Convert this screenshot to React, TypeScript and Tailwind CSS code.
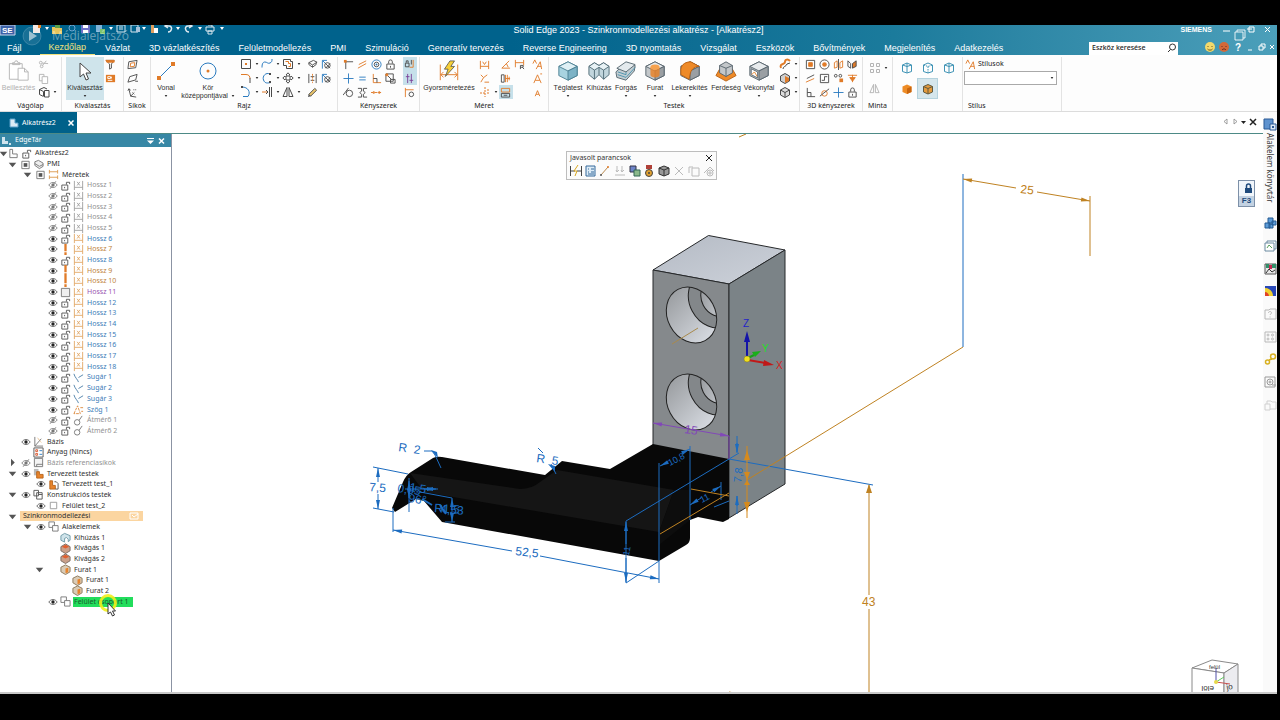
import React from 'react';
import clsx from 'clsx';

const O = '#e07b28';
const B = '#2b7bbf';
const K = '#4a4a4a';
const G = '#b4b4b4';

/* 12x12 ribbon glyphs */
const glyphs: Record<string, React.ReactNode> = {
  cut: <g stroke={G}><circle cx="3" cy="4" r="1.5" /><circle cx="4" cy="8" r="1.5" /><path d="M4.5 4.5 11 5M5 7 9 2" /></g>,
  copy: <g stroke={G}><path d="M1.5 1.5h5v7h-5z" /><path d="M4.5 4h6v7.5h-6z" fill="#fff" /></g>,
  pasteSpecial: <g stroke={K}><path d="M6 1.5 1.5 3.5v5l4 2M6 1.5l3 1.5M1.5 3.5l4 2V10" /><path d="M6.5 4.5H11V11H6.5z" fill="#fff" /></g>,
  filter: <g stroke={K}><path d="M1 1.5h9L7 5.5V10l-2 1V5.500z" fill="#fff" /><path d="M1 1.5h9v2H2z" fill={O} stroke={O} /></g>,
  filterBox: <g><path d="M1 2h10v8H1z" fill={O} /><path d="M3 4h3v2H3zM7 4v2M3 8h5" stroke="#fff" /></g>,
  plane1: <g stroke={K}><path d="M2 3l9-1.5-1.5 8L1 10.5z" /><path d="M4 4.5l4.5-.5-.5 4-4.5.5z" stroke={O} /></g>,
  plane2: <g stroke={K}><path d="M3 4l8-2.5-1.5 6L1 10z" /><path d="M9 9h3" /></g>,
  plane3: <g stroke={K}><path d="M2 2l2 8 6 1M2 2 1 4M2 2l2 1.5" /><path d="M7 3h3M6 6l2 2" strokeDasharray="1 1" /><path d="M4 10 8 6" /></g>,
  rect: <g stroke={K}><path d="M1.5 1.5h9v9h-9z" /><path d="M5 5h2v2H5z" fill={O} stroke="none" /></g>,
  curve: <path d="M1 9.500c0-4 1-5.500 3-5.500s3 2 5 1 2-2 2-4" stroke={B} />,
  offset: <g stroke={K}><path d="M1.5 1.5h7v2h2v7h-6v-3h-3z" /><path d="M3.5 3.5h3v2h2v3h-2" stroke={O} /></g>,
  erase: <g stroke={K}><path d="M2 4l5-2.5 4 2-5 3zM2 4v2l4 3V7M6 9l4-3V4" /></g>,
  relate: <g stroke={K}><path d="M1.5 1.5v9M1.5 1.5h5M2 2l3 3" stroke={B} /><circle cx="7" cy="7" r="3" /><path d="M5 5l5 5M10 5 5 10" /></g>,
  fillet: <g><path d="M1 2.5h5c3 0 4 2 4 4" stroke={O} /><path d="M10 6v5" stroke={K} /></g>,
  arc: <g><path d="M9 2C5 0 1 4 2.5 8S7 11 10 10.5" stroke={B} /><path d="M8 1h2v2H8zM8 9h2v2H8z" fill={K} /></g>,
  move: <path d="M6 .8 4 3h1v2H3V4L.8 6 3 8V7h2v2H4l2 2.2L8 9H7V7h2v1l2.200-2L9 4v1H7V3h1z" stroke={K} fill="#fff" />,
  symDim: <g stroke={K}><path d="M2 1v10M10 1v10M4 4h4M4 8h4" /><path d="M6 1v10" stroke={O} strokeDasharray="2 1" /></g>,
  arc2: <g><path d="M2 1c6 0 9 5 6 9.500H3" stroke={B} /><path d="M1 0h2v2H1z" fill={K} /></g>,
  trim: <g><path d="M1 6h6" stroke={O} /><path d="M8.5 1v10M10.5 1v10M5 4l2 2-2 2" stroke={K} /></g>,
  mirror: <path d="M5 1.5v9H1zM7 1.5v9h4z" stroke={K} />,
  pencil: <g><path d="M2 8 8.5 1.5l2 2L4 10z" fill="#e9c46a" stroke={K} /><path d="M1 11l1-3 2 2z" fill={K} /></g>,
  corner: <g><path d="M3 11V3h8" stroke={K} /><path d="M1 1h3v3H1z" fill={O} /></g>,
  slashes: <path d="M1 10 10 5M2 6l8-4" stroke={O} />,
  concentric: <g stroke={B}><circle cx="6" cy="6" r="5" /><circle cx="6" cy="6" r="2.5" stroke={K} /><circle cx="6" cy="6" r=".6" fill={K} /></g>,
  lock: <g stroke={K}><path d="M2 5.5h8V11H2z" /><path d="M4 5V3a2 2 0 0 1 4 0v2M6 7.5v2" /></g>,
  plus: <path d="M6 .5v11M.5 6h11" stroke={B} />,
  equal: <path d="M2.5 4.5h7M2.5 7.5h7" stroke={B} />,
  perp: <g><path d="M2.5 1v9.5H11" stroke={O} /><path d="M2.5 6h4v4.5" stroke={K} /></g>,
  rigid: <g stroke={K}><path d="M1 1h8v8H1zM3 3l4 4M6 7h5v4H6z" /><path d="M1 1h2v2H1z" fill={O} stroke={O} /></g>,
  tangent: <g stroke={K}><circle cx="7" cy="7" r="3.5" /><path d="M0 9 6 1" /></g>,
  symmetric: <path d="M1 1.5h4v3L3 6l2 2v3H1M11 1.5H7v3L9 6 7 8v3h4" stroke={K} />,
  horiz: <g stroke={O}><path d="M0 6h12" strokeDasharray="3 1" /><circle cx="3" cy="6" r="1" /><circle cx="9" cy="6" r="1" /></g>,
  lockPt: <g stroke={K}><path d="M1.5 4.5h4v4h-4zM2.5 4V2h2v2M8 1v5" /><path d="M10 1v8H6" stroke={O} /></g>,
  updown: <path d="M4 1v10M2 4h4M8 1v10M6 8h4" stroke="#7b3f98" />,
  dimGear: <g><path d="M1.5 1v10M1.5 3h9" stroke={O} /><circle cx="8" cy="8" r="2.5" stroke={K} /></g>,
  dim: <g stroke={O}><path d="M1.5 2v9M10.5 2v9M1.5 8h9M4 3l2 3 2-3" /></g>,
  angle: <g stroke={O}><path d="M10 2 2 10h9M7 5l2 4" /></g>,
  dimR: <g stroke={O}><path d="M1.5 1v8M10.5 1v6M1.5 4h9" /><path d="M7 11V7h3v2H7M9 9l2 2" stroke={K} /></g>,
  angleDim: <g stroke={O}><path d="M2 2l3 3-3 5M5 5l4-3M6 10h5" /></g>,
  colDim: <g><path d="M1.5 2h3v8h-3z" stroke={K} /><path d="M6 2v8M8 2v8M10 4v4M6 6h5" stroke={O} /></g>,
  coordDim: <g><path d="M1 7h5V1M6 7v4M8 4h3M8 7h3" stroke={O} strokeDasharray="2 1" /></g>,
  autoDim: <g stroke={K}><path d="M1.5 1.5h9v4h-9z" stroke={O} /><path d="M1.5 7h9v4h-9zM4 9h4" /></g>,
  letters: <g stroke={O}><path d="M1 5 3 1l2 4M4.5 11 9 3l1.5 8M6 8h4" /></g>,
  letterBig: <path d="M2 11 6 2l4 9M3.5 8h5M9 1h2" stroke={O} />,
  letterSmall: <path d="M3.5 10 6 4l2.5 6M4.5 8h3" stroke={O} />,
  sweep: <g><path d="M2 10c-2-5 4-3 4-6s3-3 5-1" stroke={O} strokeWidth="2" /><path d="M4 11c0-3 3-2 4-5l3-1" stroke={K} /></g>,
  solidMini: <g><path d="M1.5 4 6 1.5 10.5 4v5L6 11.5 1.5 9z" fill="#cfcfcf" stroke={K} /><path d="M6 4l4 2v3l-4 2z" fill={O} /></g>,
  boxMini: <g stroke={K}><path d="M1.5 4 6 1.5 10.5 4v5L6 11.5 1.5 9z" fill="#ddd" /><path d="M1.5 4 6 6.5 10.5 4M6 6.5v5" /></g>,
  squareDot: <g stroke={K}><path d="M1.5 1.5h9v9h-9z" /><path d="M4 4h4v4H4z" stroke={O} fill={O} /></g>,
  circleDot: <g><circle cx="6" cy="6" r="5" stroke={K} /><circle cx="6" cy="6" r="2.5" fill={O} /></g>,
  parallel: <g><path d="M1.5 10V4l3-2v7zM7.5 10V4l3-2v7z" stroke={O} /><path d="M6 0v12" stroke={K} /></g>,
  coplanar: <g><path d="M1 2l3 3v5L1 8z" stroke={K} /><path d="M6 5l4-3v6l-4 2z" fill={O} stroke={K} /></g>,
  slash2: <g><path d="M1 10 10 6" stroke={O} /><path d="M2 6l8-4" stroke={K} /></g>,
  boxS: <g stroke={K}><path d="M1.5 1.5h9v9h-9zM3 8h3V4h3" /></g>,
  dots: <g><circle cx="3" cy="3" r="1.5" stroke={K} /><circle cx="8" cy="3" r="1.5" stroke={K} /><path d="M7 6h4v4H7z" fill={O} /></g>,
  flagDown: <path d="M1 2.5h10M6 2v8M3 5l3 4 3-4z" stroke={O} fill={O} />,
  perpK: <path d="M2.5 1v9.5H11M2.5 6h4v4.5" stroke={K} />,
  tangO: <g><circle cx="6" cy="7" r="3" stroke={O} /><path d="M1 10 11 2" stroke={K} /></g>,
  pattern: <g stroke={G}><path d="M1.5 1.5h3v3h-3zM7.5 1.5h3v3h-3zM1.5 7.5h3v3h-3zM7.5 7.5h3v3h-3z" /></g>,
  mirrorG: <path d="M5 1.5v9H1zM7 1.5v9h4z" stroke={G} />,
  wire: <g stroke="#3f93b5"><path d="M1.5 3 6 1l4.5 2v6.500L6 11 1.5 9.5zM6 1v10M1.5 3 6 4.5 10.5 3" /></g>,
  wire2: <g stroke="#3f93b5"><path d="M1.5 3 6 1l4.5 2v6.500L6 11 1.5 9.5z" /><path d="M1.5 3 6 4.5 10.5 3M6 4.5V11" strokeDasharray="1.5 1" /></g>,
  shaded: <g><path d="M1.5 3.5 6 1.5l4.5 2V9L6 11 1.5 9z" fill="#ee8c26" /><path d="M6 5.5 10.5 3.5V9L6 11z" fill="#c9660f" /></g>,
  shadedEdge: <g stroke="#5f5a40"><path d="M1.5 3.5 6 1.5l4.5 2V9L6 11 1.5 9z" fill="#e49a3d" /><path d="M1.5 3.5 6 5.5l4.5-2M6 5.5V11" /></g>,
};

const Glyph = ({ n, s = 12 }: { n: string; s?: number }) => (
  <svg viewBox="0 0 12 12" width={s} height={s} fill="none" className="shrink-0">{glyphs[n]}</svg>
);

const Caret = ({ className = '' }: { className?: string }) => (
  <svg viewBox="0 0 4 3" className={clsx('h-[2px] w-[4px] shrink-0', className)}><path d="M0 0h4L2 3z" fill="#333" /></svg>
);

/* small ribbon button, optionally followed by a drop-down caret */
const Tool = ({ n, caret, on }: { n: string; caret?: boolean; on?: boolean }) => (
  <button aria-label={n} className={clsx('flex h-[14px] items-center pl-px', caret ? 'w-[21px] gap-[3px]' : 'w-[14px]', on && 'bg-[#c6e0ea]')}>
    <Glyph n={n} s={caret ? 12 : 11} />
    {caret && <Caret />}
  </button>
);

const Col = ({ items, caret, className = '' }: { items: (string | null)[]; caret?: boolean; className?: string }) => (
  <div className={clsx('flex flex-col', className)}>
    {items.map((n, i) => (n ? <Tool key={i} n={n} caret={caret} /> : <span key={i} className="h-[14px] w-[14px]" />))}
  </div>
);

const Group = ({ label, width, children }: { label?: string; width: string; children: React.ReactNode }) => (
  <section className={clsx('flex h-full shrink-0 flex-col border-r border-[#e3e3e3]', width)}>
    <div className="flex h-[43px] items-start">{children}</div>
    <div className="h-[11px] text-center font-['Noto_Sans'] text-[7px] leading-[11px] whitespace-nowrap text-[#222]">{label}</div>
  </section>
);

const Big = ({ label, width, icon, caret, on, dim, second }: {
  label: string; width: string; icon: React.ReactNode; caret?: boolean; on?: boolean; dim?: boolean; second?: string;
}) => (
  <button className={clsx('flex h-[43px] shrink-0 flex-col items-center pt-px', width, on && 'bg-[#cfe4eb]', dim ? 'text-[#b0b0b0]' : 'text-[#2e2e2e]')}>
    <span className="flex h-[26px] items-center justify-center">{icon}</span>
    <span className="text-[7px] leading-[8px] whitespace-nowrap">{label}</span>
    {second && <span className="flex items-center gap-[3px] text-[7px] leading-[7px] whitespace-nowrap">{second}<Caret /></span>}
    {caret && <Caret className="mt-[3px]" />}
  </button>
);

const solid = (extra?: React.ReactNode) => (
  <svg viewBox="0 0 24 24" className="size-[22px]" fill="none">
    <path d="M2 7 12 2l10 5v10l-10 5L2 17z" fill="#c3c7ca" stroke="#55636b" />
    <path d="M2 7 12 2l10 5-10 5z" fill="#e8ebed" stroke="#55636b" />
    <path d="M12 12v10l10-5V7z" fill="#9a9fa3" stroke="#55636b" />
    {extra}
  </svg>
);

const bigIcons = {
  paste: <svg viewBox="0 0 24 24" className="size-[22px]" fill="#fff" stroke={G}><path d="M1.5 4h14v17h-14zM5 5V3h2l1-2h2l1 2h2v2z" /><path d="M11 9h7l4 4v9H11zM18 9v4h4" /></svg>,
  arrow: <svg viewBox="0 0 22 22" className="size-[22px]" fill="#fff" stroke="#444"><path d="M6 3v14l3.500-3 2.500 6 2.500-1-2.500-6H17z" /></svg>,
  line: <svg viewBox="0 0 22 22" className="size-[22px]"><path d="M4 18 18 4" stroke={B} /><path d="M2 16h4v4H2zM16 2h4v4h-4z" fill={O} /></svg>,
  circle: <svg viewBox="0 0 22 22" className="size-[22px]" fill="none"><circle cx="11" cy="11" r="8" stroke={B} /><circle cx="11" cy="11" r="1.5" fill={O} /></svg>,
  smart: <svg viewBox="0 0 24 24" className="size-[22px]" fill="none"><path d="M2.5 5v17M21.5 5v17M3 16h18M6 13l-3 3 3 3M18 13l3 3-3 3" stroke={O} /><path d="M13 1 7 10h4l-3 8 10-11h-4l4-6z" fill="#f7d038" stroke="#444" strokeWidth=".8" /></svg>,
  block: (
    <svg viewBox="0 0 24 24" className="size-[22px]"><path d="M2 7 12 2l10 5v10l-10 5L2 17z" fill="#a8d3e0" stroke="#4a7f92" /><path d="M2 7l10-5 10 5-10 5z" fill="#dff0f5" stroke="#4a7f92" /><path d="M12 12v10l10-5V7z" fill="#7db3c6" stroke="#4a7f92" /></svg>
  ),
  extrude: (
    <svg viewBox="0 0 24 24" className="size-[22px]"><path d="M1 7l6-4 5 3 5-3 6 4v9l-6 5-5-5-5 5-6-5z" fill="#c2d6dd" stroke="#4f6a75" /><path d="M1 7l6-4 5 3 5-3 6 4-6 4-5-3-5 3z" fill="#e8f2f5" stroke="#4f6a75" /><path d="M7 11v10M17 11v10M12 8v8" stroke="#4f6a75" /></svg>
  ),
  revolve: (
    <svg viewBox="0 0 24 24" className="size-[22px]" stroke="#54666e"><path d="M1 13l11-10 10 3-1 6-9 10-10-3z" fill="#c3cdd2" /><path d="M2 9l10-7 10 3L12 13z" fill="#e4eaed" /><path d="M12 13v3L3 13M22 8 12 19 3 16" fill="none" stroke="#4a93ad" /></svg>
  ),
  hole: solid(<g><ellipse cx="12" cy="8" rx="5" ry="3" fill="#f6a24f" /><path d="M7 8c0 4 10 4 10 0v8c0 4-10 4-10 0z" fill="#e8842c" opacity=".85" /></g>),
  round: solid(<path d="M2 10C3 4 8 2 13 2l9 5c-6 0-9 4-10 9l-1 5-9-5z" fill="#ee8a28" stroke="#b85f10" />),
  draft: <svg viewBox="0 0 24 24" className="size-[22px]"><path d="M1 17 5 10h14l4 7-11 6z" fill="#ee8a28" stroke="#b85f10" /><path d="M5 6l7-4 7 4v8l-7 4-7-4z" fill="#c3c7ca" stroke="#55636b" /><path d="M5 6l7 3 7-3M12 9v9" stroke="#55636b" fill="none" /></svg>,
  shell: solid(<g><path d="M3.5 9.500l7 3.500v6.500l-7-3.500z" fill="#fff" stroke="#55636b" /><path d="M4 16l3-3 3 5" fill="none" stroke="#e8842c" /></g>),
};

/* tree glyphs */
const treeIcons: Record<string, React.ReactNode> = {
  part: <path d="M2 1.5h3v5h5v4H2z" stroke="#777" />,
  lock: <path d="M2 5.5h6.500V11H2zM5 7.5v1.5M7 5V2.500h3.500v2" stroke="#555" />,
  check: <g><path d="M2 2.5h8v8H2z" stroke="#777" /><path d="M4 4.5h4v4H4z" fill="#555" /></g>,
  pmi: <g stroke="#777"><path d="M2 3l4-1.5 5 3V8L7 10.5 2 7z" fill="#eee" /><path d="M2 5l5 3 4-2" /></g>,
  dims: <g stroke="#dc9a4e"><path d="M1.5 1v4M10.5 1v4M1.5 3h9M1.5 7v4M10.5 7v4M1.5 9h9" /></g>,
  dimOff: <g stroke="#a0a0a0"><path d="M1.5 1v10M10.5 1v10M1.5 8h9M4.5 2l3 4M7.5 2l-3 4" /></g>,
  dimOn: <g stroke="#e3a868"><path d="M1.5 1v10M10.5 1v10M1.5 8h9M4.5 2l3 4M7.5 2l-3 4" /></g>,
  mark: <path d="M6 0v8M6 9v3" stroke="#e07b28" strokeWidth="2.5" />,
  box: <path d="M1.5 1.5h9v9h-9z" stroke="#777" fill="#eee" />,
  radius: <g stroke="#4c7fa8"><path d="M1 2c1 4 4 6 5 9M6 6l5-3" /></g>,
  angle: <g stroke="#dc8a3e"><path d="M1 10.5 5 2l3 8.5H1M8 4h3M9 8h2" strokeDasharray="3 1" /></g>,
  diam: <g stroke="#777"><circle cx="4.5" cy="8" r="3" /><path d="M6.500 6 10 1" /></g>,
  base: <g><path d="M2 1v10h9M2 11l7-8" stroke="#777" /><path d="M5 2l4 5" stroke="#d9984c" strokeDasharray="1 1" /></g>,
  material: <g><path d="M1 1h10v10H1z" stroke="#555" /><path d="M3 3h2v2H3zM3 7h2v2H3z" stroke="#d8542c" /><path d="M7 4h3M7 8h3" stroke="#2b7bbf" /></g>,
  planes: <g stroke="#777"><path d="M1.5 1.5h9v9h-9z" fill="#f4f4f4" /><path d="M4 10.5V8h6.500" /></g>,
  bodies: <g><path d="M1 1h5v7H1z" fill="#bbb" /><path d="M4 4h3v3h4v4H4z" fill="#e8842c" stroke="#b8651a" /></g>,
  body: <g><path d="M2 2h3v5h3v4H2z" fill="#e8842c" stroke="#b8651a" /><path d="M7 3h2l2 2v6H8" stroke="#555" /></g>,
  surfs: <g stroke="#555"><path d="M1 1.5h5v6H1zM4 4h6v7H4z" fill="#fff" /><path d="M6 6h4" /></g>,
  surf: <path d="M2.5 2.5h7v7h-7z" stroke="#999" fill="#fff" />,
  feats: <g stroke="#777"><path d="M1 1h6v6H1z" fill="#fff" /><path d="M5 5h6v6H5z" fill="#fff" /></g>,
  extr: <g stroke="#6c98a5"><path d="M1 4l4-2.5L11 4v5l-2 1.5V8L7 6 5 7v4L1 9z" fill="#cfe3ea" /></g>,
  cutout: <g stroke="#7a6a60"><path d="M1 4l5-3 5 3v4.500L6 11.5 1 8.5z" fill="#c9a08a" /><path d="M2 4l4-2 4 2-4 2z" fill="#e06030" stroke="none" /></g>,
  holeF: <g stroke="#8a7558"><path d="M1 3.5 6 1l5 2.5v5L6 11.5 1 8.5z" fill="#d9cbb6" /><path d="M6 5l3-1v5l-3 1z" fill="#e8842c" stroke="none" /></g>,
  eye: <g><path d="M1 6c2.500-4 7.500-4 10 0-2.500 4-7.500 4-10 0z" stroke="#555" fill="#fff" /><circle cx="6" cy="6" r="2" fill="#222" /></g>,
  hidden: <g stroke="#777"><path d="M1 6c2.500-4 7.500-4 10 0-2.500 4-7.500 4-10 0z" /><circle cx="6" cy="6" r="1.5" fill="#777" /><path d="M2.500 10.500l7-9" /></g>,
  down: <path d="M1 3.500h10L6 9.500z" fill="#555" />,
  right: <path d="M4 1v10l5-5z" fill="#555" />,
};

type Row = { t: string; pad: string; s: (string | null)[]; c?: string };
const off = 'text-[#929292]';
const blue = 'text-[#3b7db8]';
const orange = 'text-[#c08440]';
const hossz = (n: number): Row => {
  const hidden = n < 6;
  const mark = n === 7 || n === 9 || n === 10;
  return {
    t: `Hossz ${n}`,
    pad: 'pl-[46px]',
    s: [hidden ? 'hidden' : 'eye', mark ? 'mark' : n === 11 ? 'box' : 'lock', hidden ? 'dimOff' : 'dimOn'],
    c: hidden ? off : mark ? orange : n === 11 ? 'text-[#9a55b0]' : blue,
  };
};

const rows: Row[] = [
  { t: 'Alkatrész2', pad: 'pl-0', s: ['down', 'part', 'lock'] },
  { t: 'PMI', pad: 'pl-[6px]', s: ['down', 'check', 'pmi'] },
  { t: 'Méretek', pad: 'pl-[21px]', s: ['down', 'check', 'dims'] },
  ...Array.from({ length: 18 }, (_, i) => hossz(i + 1)),
  ...[1, 2, 3].map(n => ({ t: `Sugár ${n}`, pad: 'pl-[46px]', s: ['eye', 'lock', 'radius'], c: blue })),
  { t: 'Szög 1', pad: 'pl-[46px]', s: ['eye', 'lock', 'angle'], c: blue },
  { t: 'Átmérő 1', pad: 'pl-[46px]', s: ['hidden', 'lock', 'diam'], c: off },
  { t: 'Átmérő 2', pad: 'pl-[46px]', s: ['hidden', 'lock', 'diam'], c: off },
  { t: 'Bázis', pad: 'pl-[19px]', s: ['eye', 'base'] },
  { t: 'Anyag (Nincs)', pad: 'pl-[32px]', s: ['material'] },
  { t: 'Bázis referenciasíkok', pad: 'pl-[6px]', s: ['right', 'hidden', 'planes'], c: off },
  { t: 'Tervezett testek', pad: 'pl-[6px]', s: ['down', 'eye', 'bodies'] },
  { t: 'Tervezett test_1', pad: 'pl-[34px]', s: ['eye', 'body'] },
  { t: 'Konstrukciós testek', pad: 'pl-[6px]', s: ['down', 'eye', 'surfs'] },
  { t: 'Felület test_2', pad: 'pl-[34px]', s: ['eye', 'surf'] },
  { t: 'Szinkronmodellezési', pad: 'pl-[6px]', s: ['down'] },
  { t: 'Alakelemek', pad: 'pl-[21px]', s: ['down', 'eye', 'feats'] },
  { t: 'Kihúzás 1', pad: 'pl-[59px]', s: ['extr'] },
  { t: 'Kivágás 1', pad: 'pl-[59px]', s: ['cutout'] },
  { t: 'Kivágás 2', pad: 'pl-[59px]', s: ['cutout'] },
  { t: 'Furat 1', pad: 'pl-[33px]', s: ['down', null, 'holeF'] },
  { t: 'Furat 1', pad: 'pl-[71px]', s: ['holeF'] },
  { t: 'Furat 2', pad: 'pl-[71px]', s: ['holeF'] },
  { t: 'Felület csoport 1', pad: 'pl-[46px]', s: ['eye', 'feats'], c: 'text-[#1c5a2c]' },
];

const TreeRow = ({ row }: { row: Row }) => {
  const band = row.t === 'Szinkronmodellezési';
  const picked = row.t === 'Felület csoport 1';
  return (
    <li className={clsx('flex min-h-0 items-center', row.pad)}>
      {row.s.map((n, i) => (
        <span key={i} className={clsx('flex shrink-0 justify-center', row.pad === 'pl-0' && i === 0 ? 'w-[7px]' : 'w-[13px]')}>
          {n && (
            <svg viewBox="0 0 12 12" fill="none" className={clsx('shrink-0', n === 'down' || n === 'right' ? 'size-[9px]' : n === 'eye' || n === 'hidden' ? 'size-[10px]' : 'size-[11px]')}>
              {treeIcons[n]}
            </svg>
          )}
        </span>
      ))}
      <span
        className={clsx(
          'ml-px flex items-center leading-[10px] whitespace-nowrap',
          row.c ?? 'text-[#303030]',
          band ? 'w-[123px] bg-[#fbd5a0] pl-[3px]' : 'pl-px',
          picked && 'w-[60px] bg-[#22dd5c]',
        )}
      >
        {row.t}
        {band && <svg viewBox="0 0 10 8" className="mr-[4px] ml-auto h-[8px] w-[10px]" fill="none" stroke="#fff"><path d="M1 1h8v6H1zM3 3l2 2 4-3" /></svg>}
      </span>
    </li>
  );
};

const menuTabs = [
  'Vázlat', '3D vázlatkészítés', 'Felületmodellezés', 'PMI', 'Szimuláció', 'Generatív tervezés', 'Reverse Engineering',
  '3D nyomtatás', 'Vizsgálat', 'Eszközök', 'Bővítmények', 'Megjelenítés', 'Adatkezelés',
];

const Header = () => (
  <header className="relative h-[30px] shrink-0 overflow-hidden bg-linear-to-r from-[#00628c] from-40% via-[#1b7b9c] via-70% to-[#4b9fba] text-white">
    <div className="flex h-[16px] items-start">
      <svg viewBox="0 0 230 12" className="h-[12px] w-[230px]" fill="none">
        <path d="M0 0h15v10H0z" fill="#3d62a8" stroke="#c9d7ea" />
        <text x="2" y="8" fontSize="8" fontWeight="bold" fill="#fff" fontFamily="Liberation Sans">SE</text>
        <path d="M33 0h7v8h-7z" fill="#f3e9e4" /><path d="M38 0h3v3h-3z" fill="#e8842c" />
        <path d="M52 2h4l1 1h5v6H52z" fill="#e8c55c" /><path d="M55 0h5v3h-5z" fill="#5ba04a" />
        <circle cx="72" cy="3" r="3" stroke="#6fa5d0" />
        <path d="M81 0h9v8h-9z" fill="#6d70c8" /><path d="M83 0h5v3h-5zM83 5h5v3h-5z" fill="#fff" />
        <path d="M96 0h6v7h-6z" fill="#7fb3d8" /><path d="M100 4h5v5h-5z" fill="#7ec46c" />
        <path d="M117 0h8v7h-8zM119 2h4M119 4h4" stroke="#d9e6ee" />
        <path d="M131 0h7v7h-7z" stroke="#d9e6ee" /><path d="M136 2h4v5h-4z" fill="#a8c4dc" />
        <path d="M151 0h3v8h-3z" fill="#e0a060" /><path d="M154 3h4v5h-4z" fill="#fff" />
        <path d="M166 1h3c4 0 3 6-1 6M168-1l-3 2 3 2M191 1h-3c-4 0-3 6 1 6M189-1l3 2-3 2" stroke="#dde8ef" strokeWidth="1.5" />
        <path d="M206 2h8v4h-8zM208 0h4v2M208 6h4v3h-4z" stroke="#dde8ef" />
        {[45, 109, 142, 176, 198, 220].map(x => <path key={x} d={`M${x} 2h4l-2 3z`} fill="#fff" />)}
      </svg>
      <h1 className="absolute inset-x-0 top-0 text-center text-[9px] leading-[10px] whitespace-nowrap">
        Solid Edge 2023 - Szinkronmodellezési alkatrész - [Alkatrész2]
      </h1>
      <div className="ml-auto flex items-start">
        <span className="mr-[10px] text-[7px] leading-[9px] font-bold">SIEMENS</span>
        <svg viewBox="0 0 55 16" className="h-[16px] w-[55px]" fill="none" stroke="#fff">
          <path d="M1 6h7M27 2h5v5h-5zM25 4h5M43 2l5 5M48 2l-5 5" />
          <path d="M13 7h8v8h-8zM15 7V5h8v8h-2" opacity=".85" />
        </svg>
      </div>
    </div>

    <nav className="flex h-[14px] items-start pl-[7px] text-[9px] leading-[14px] font-medium whitespace-nowrap">
      <button className="mr-[18px]">Fájl</button>
      <button className="mr-[10px] border-b border-[#f3e27c] px-[9px] leading-[13px] text-[#f3e27c]">Kezdőlap</button>
      <div className="flex gap-[19px]">{menuTabs.map(t => <button key={t}>{t}</button>)}</div>
      <div className="ml-auto flex items-center">
        <label className="relative mr-[25px] flex h-[13px] w-[89px] items-center bg-white">
          <input aria-label="Eszköz keresése" defaultValue="Eszköz keresése" className="w-full bg-transparent pl-[3px] font-['Noto_Sans'] text-[7px] text-[#222] outline-none" />
          <svg viewBox="0 0 10 10" className="absolute right-px size-[10px]" fill="none" stroke="#333"><circle cx="5.5" cy="4" r="3" /><path d="M3.500 6.500 1 9" /></svg>
        </label>
        <svg viewBox="0 0 74 14" className="h-[14px] w-[74px]" fill="none">
          <circle cx="7" cy="6" r="5" fill="#f3d96b" /><path d="M5 5v1M9 5v1M4.500 8c1 1.500 4 1.500 5 0" stroke="#6b5a20" />
          <circle cx="21" cy="6" r="5" fill="#d2693a" /><path d="M19 5v1M23 5v1M19 9c1-1.500 3-1.500 4 0" stroke="#6b2f20" />
          <text x="32" y="10" fontSize="10" fontWeight="bold" fill="#fff" fontFamily="Liberation Sans">?</text>
          <path d="M45 9h4M56 5h4v4h-4zM58 5V3h4v4h-2M67 4l4 4M71 4l-4 4" stroke="#fff" />
        </svg>
      </div>
    </nav>

    {/* player overlay */}
    <div className="absolute top-0 left-[21px] flex items-center gap-[9px] text-white/40">
      <svg viewBox="0 0 22 22" className="size-[22px]"><circle cx="11" cy="11" r="9" fill="#ffffff18" stroke="#ffffff30" /><path d="M8 6v10l8-5z" fill="#ffffff90" /></svg>
      <span className="font-['Open_Sans'] text-[12px] leading-[22px]">Médialejátszó</span>
    </div>
  </header>
);

const Ribbon = () => (
  <div className="flex h-[57px] shrink-0 items-start overflow-hidden border-b border-[#dcdcdc] bg-[#fdfdfd] pt-[2px]">
    <Group label="Vágólap" width="w-[62px]">
      <Big label="Beillesztés" width="w-[37px]" icon={bigIcons.paste} dim />
      <div>
        <Col items={['cut', 'copy']} />
        <Tool n="pasteSpecial" caret />
      </div>
    </Group>
    <Group label="Kiválasztás" width="w-[62px]">
      <div className="w-[4px]" />
      <Big label="Kiválasztás" width="w-[38px]" icon={bigIcons.arrow} caret on />
      <Col items={['filter', 'filterBox']} />
    </Group>
    <Group label="Síkok" width="w-[27px]"><Col items={['plane1', 'plane2', 'plane3']} className="ml-[2px]" /></Group>
    <Group label="Rajz" width="w-[187px]">
      <Big label="Vonal" width="w-[30px]" icon={bigIcons.line} caret />
      <Big label="Kör" second="középpontjával" width="w-[54px]" icon={bigIcons.circle} />
      <Col items={['rect', 'fillet', 'arc2']} caret className="ml-[4px]" />
      <Col items={['curve', 'arc', 'trim']} caret />
      <Col items={['offset', 'move', 'mirror']} caret />
      <Col items={['erase', 'symDim', 'pencil']} className="ml-[4px]" />
      <Col items={['relate', 'relate', null]} />
    </Group>
    <Group label="Kényszerek" width="w-[82px]">
      <Col items={['corner', 'plus', 'tangent']} className="ml-[4px]" />
      <Col items={['slashes', 'equal', 'symmetric']} />
      <Col items={['concentric', 'perp', 'horiz']} />
      <Col items={['lock', 'rigid', null]} />
      <div className="ml-[5px] flex flex-col"><Tool n="lockPt" on /><Tool n="updown" on /><Tool n="dimGear" /></div>
    </Group>
    <Group label="Méret" width="w-[129px]">
      <Big label="Gyorsméretezés" width="w-[58px]" icon={bigIcons.smart} />
      <div><Col items={['dim', 'angleDim']} /><Tool n="coordDim" caret /></div>
      <div className="flex flex-col"><Tool n="angle" /><Tool n="colDim" /><Tool n="autoDim" on /></div>
      <Col items={['dimR', null, null]} />
      <Col items={['letters', 'letterBig', 'letterSmall']} className="ml-[4px]" />
    </Group>
    <Group label="Testek" width="w-[251px]">
      <Big label="Téglatest" width="w-[38px]" icon={bigIcons.block} caret />
      <Big label="Kihúzás" width="w-[24px]" icon={bigIcons.extrude} />
      <Big label="Forgás" width="w-[30px]" icon={bigIcons.revolve} caret />
      <Big label="Furat" width="w-[28px]" icon={bigIcons.hole} caret />
      <Big label="Lekerekítés" width="w-[41px]" icon={bigIcons.round} caret />
      <Big label="Ferdeség" width="w-[32px]" icon={bigIcons.draft} />
      <Big label="Vékonyfal" width="w-[34px]" icon={bigIcons.shell} caret />
      <Col items={['sweep', 'solidMini', 'boxMini']} caret className="ml-[2px]" />
    </Group>
    <Group label="3D kényszerek" width="w-[63px]">
      <Col items={['squareDot', 'slash2', 'perpK']} className="ml-[4px]" />
      <Col items={['circleDot', 'boxS', 'tangO']} />
      <Col items={['parallel', 'dots', 'plus']} />
      <Col items={['coplanar', 'flagDown', 'lock']} />
    </Group>
    <Group label="Minta" width="w-[30px]">
      <div className="ml-[5px] flex flex-col gap-[6px] pt-[4px]"><Tool n="pattern" caret /><Tool n="mirrorG" /></div>
    </Group>
    <Group width="w-[70px]">
      <div className="grid grid-cols-3 pl-[3px]">
        {['wire', 'wire2', 'wire', 'shaded', 'shadedEdge'].map((n, i) => (
          <button key={i} aria-label={n} className={clsx('flex size-[21px] items-center justify-center', i === 4 && 'border border-[#b5d3de] bg-[#d5e6ec]')}><Glyph n={n} /></button>
        ))}
      </div>
    </Group>
    <Group width="w-[99px]">
      <div className="flex w-full flex-col pl-px">
        <label htmlFor="stilus" className="flex h-[14px] items-center gap-[2px] pl-px font-['Noto_Sans'] text-[7px] text-[#222]"><Glyph n="letters" s={11} />Stílusok</label>
        <div className="relative w-[93px]">
          <select id="stilus" className="block h-[14px] w-full appearance-none border border-[#a9a9a9] bg-white"><option /></select>
          <Caret className="absolute top-[6px] right-[3px]" />
        </div>
        <span className="mt-[15px] ml-[4px] font-['Noto_Sans'] text-[7px] leading-[11px] text-[#222]">Stílus</span>
      </div>
    </Group>
  </div>
);

/* dimension line; ends picks which side gets an arrow head */
const Dim = ({ x1, y1, x2, y2, c, ends = 'both' }: { x1: number; y1: number; x2: number; y2: number; c: string; ends?: 'both' | 'start' | 'end' }) => {
  const a = (Math.atan2(y2 - y1, x2 - x1) * 180) / Math.PI;
  return (
    <g stroke={c} fill={c}>
      <path d={`M${x1} ${y1}L${x2} ${y2}`} />
      {ends !== 'end' && <path d="M0 0l9-2v4z" stroke="none" transform={`translate(${x1} ${y1}) rotate(${a})`} />}
      {ends !== 'start' && <path d="M0 0l-9-2v4z" stroke="none" transform={`translate(${x2} ${y2}) rotate(${a})`} />}
    </g>
  );
};

const Hole = ({ y }: { y: number }) => (
  <g transform={`translate(691.500 ${y})`}>
    <clipPath id={`hole${y}`}><ellipse rx="24" ry="29" transform="rotate(-28)" /></clipPath>
    <g clipPath={`url(#hole${y})`} stroke="#222">
      <rect x="-30" y="-32" width="60" height="64" fill="url(#bore)" stroke="none" />
      <ellipse cx="22" cy="-15" rx="24" ry="29" transform="rotate(-28 22 -15)" fill="#83878a" />
      <ellipse cx="26" cy="-17" rx="16" ry="19" transform="rotate(-28 26 -17)" fill="url(#bore)" />
    </g>
    <ellipse rx="24" ry="29" transform="rotate(-28)" fill="none" stroke="#222" />
  </g>
);

const dimBlue = '#1c6cc0';
const dimOrange = '#bf8222';

const Model = () => (
  <svg viewBox="172 134 1091 560" preserveAspectRatio="xMinYMin slice" className="block h-full w-full" fontFamily="Liberation Sans" fontSize="12">
    <defs>
      <linearGradient id="bore" x1="0" y1="0" x2="1" y2="1"><stop offset="0" stopColor="#8e9194" /><stop offset="1" stopColor="#e3e7ee" /></linearGradient>
      <linearGradient id="top" x1="0" y1="0" x2="1" y2="1"><stop offset="0" stopColor="#b4bac4" /><stop offset="1" stopColor="#cdd2da" /></linearGradient>
    </defs>

    <g stroke="#26282a" strokeLinejoin="round">
      <path d="M653 270 708.500 235.500 785 250 729 284z" fill="url(#top)" />
      <path d="M653 270 729 284V518L653 500z" fill="#85898c" />
      <path d="M729 284 785 250V484L729 518z" fill="#7b8387" />
    </g>
    <Hole y={315} />
    <Hole y={402} />
    <path d="M672 344 698 328" stroke="#a98a4c" />

    {/* clamp body */}
    <path d="M653 444 729 459V519L723 522 698 517 690 520V538Q690 543 686 545L659 561 442 522 424 501 416 499 395 512 392 508 403 482Q406 475 411 472L433 458Q437 456 442 457L545 475 562 461 610 469z" fill="#080808" />
    <path d="M410 473 520 489Q532 489 540 482L557 470 674 490 659 532 424 492z" fill="#151515" />
    <path d="M674 490 659 532V545L690 520V490z" fill="#0d0d0d" />

    <g fill={dimBlue}>
      <text x="398" y="451" transform="rotate(8 398 451)">R&nbsp; 2</text>
      <text x="536" y="462" transform="rotate(8 536 462)">R&nbsp; 5</text>
      <text x="369" y="491" transform="rotate(4 369 491)">7,5</text>
      <text x="515" y="555" transform="rotate(6 515 555)">52,5</text>
      <text x="397" y="492" transform="rotate(8 397 492)">0,05</text>
      <text x="409" y="491" transform="rotate(8 409 491)">1,5</text>
      <text x="408" y="502" transform="rotate(8 408 502)">96°</text>
      <text x="434" y="512" transform="rotate(4 434 512)">R1,5</text>
      <text x="440" y="513" transform="rotate(4 440 513)">4,53</text>
      <text x="670" y="466" fontSize="9" transform="rotate(-28 670 466)">10,8</text>
      <text x="702" y="503" fontSize="9" transform="rotate(-28 702 503)">11</text>
      <text x="741" y="483" fontSize="11" transform="rotate(-83 741 483)">7,8</text>
      <text x="629" y="556" fontSize="9" transform="rotate(-80 629 556)">11</text>
    </g>
    <g stroke={dimBlue} fill="none">
      <path d="M393 508V532M659 463V583M626 521V583L659 561M626 521 739 453M690 446V520M729 459 873 485" />
      <path d="M373 467 408 474M373 508 394 512M424 451h8l3 4 6 13M538 448l5 5M551 464l5 10M405 489h33M409 478v34M420 492l32 6M445 522h10" />
      <path d="M721 482v18M714 507l15-6M737 436v16M737 496v18" />
    </g>
    <path d="M431 450l6 2 1 6zM548 464l7 2 0 6z" fill={dimBlue} />
    <Dim x1={378} y1={468} x2={378} y2={482} c={dimBlue} ends="start" />
    <Dim x1={378} y1={494} x2={378} y2={509} c={dimBlue} ends="end" />
    <Dim x1={393} y1={530} x2={512} y2={551} c={dimBlue} ends="start" />
    <Dim x1={540} y1={556} x2={659} y2={579} c={dimBlue} ends="end" />
    <Dim x1={626} y1={522} x2={626} y2={544} c={dimBlue} ends="start" />
    <Dim x1={626} y1={558} x2={626} y2={582} c={dimBlue} ends="end" />
    <Dim x1={660} y1={466} x2={668} y2={462} c={dimBlue} ends="start" />
    <Dim x1={682} y1={453} x2={690} y2={449} c={dimBlue} ends="end" />
    <Dim x1={690} y1={505} x2={701} y2={498} c={dimBlue} ends="start" />
    <Dim x1={711} y1={492} x2={721} y2={486} c={dimBlue} ends="end" />
    <Dim x1={737} y1={443} x2={737} y2={453} c={dimBlue} ends="end" />
    <Dim x1={737} y1={496} x2={737} y2={506} c={dimBlue} ends="start" />
    <Dim x1={452} y1={498} x2={452} y2={522} c={dimBlue} />
    <Dim x1={409} y1={481} x2={409} y2={498} c={dimBlue} />
    <Dim x1={424} y1={489} x2={436} y2={489} c={dimBlue} />
    <path d="M422 499l10 6M440 505l6 9" stroke={dimBlue} strokeWidth="2" />

    <Dim x1={653} y1={423} x2={729} y2={436} c="#8248b8" />
    <path d="M729 436v23" stroke="#8248b8" />
    <text x="684" y="433" fill="#8248b8" transform="rotate(8 684 433)">15</text>

    <g stroke={dimOrange} fill="none">
      <path d="M660 534 729 493M691 489 729 496M747 480 963 347M869 485v110M869 609v85" />
      <path d="M1090 196v60M739 137l7-3M729 692l16 3" />
    </g>
    <path d="M869 484l-3 9h6z" fill={dimOrange} />
    <text x="862" y="606" fill={dimOrange}>43</text>
    <g stroke="#d68a1c" fill="#d68a1c">
      <path d="M747 446v72" />
      <path d="M747 450l-3 10h6zM747 480l-3-8h6zM747 480l-3 5h6zM747 512l-3-10h6z" stroke="none" />
    </g>
    <path d="M963 174v173" stroke={dimBlue} />
    <Dim x1={963} y1={179} x2={1016} y2={188} c={dimOrange} ends="start" />
    <Dim x1={1037} y1={192} x2={1090} y2={201} c={dimOrange} ends="end" />
    <text x="1020" y="193" fill={dimOrange} transform="rotate(6 1020 193)">25</text>

    {/* triad */}
    <g strokeWidth="2">
      <path d="M747 358V341" stroke="#1414a8" /><path d="M747 331l-3 11h6z" fill="#1414a8" />
      <path d="M748 358l6-3" stroke="#18a018" /><path d="M761 351l-9 1 3 5z" fill="#18b018" />
      <path d="M748 360l17 3" stroke="#c01818" /><path d="M774 365l-10-5-1 6z" fill="#c01818" />
    </g>
    <circle cx="747" cy="359" r="3" fill="#f0e020" stroke="#8a8010" strokeWidth=".5" />
    <g fontSize="10">
      <text x="743" y="327" fill="#2424c8">Z</text>
      <text x="762" y="352" fill="#20e020">Y</text>
      <text x="776" y="369" fill="#d82020">X</text>
    </g>

    {/* view cube */}
    <g stroke="#8a8a8a" fill="#fff">
      <path d="M1192 668 1212 660 1238 664 1224 673z" />
      <path d="M1192 668 1224 673V696H1192z" />
      <path d="M1224 673 1238 664V696H1224z" fill="#ececf0" />
    </g>
    <path d="M1216 682V668" stroke="#5050a8" /><path d="M1216 682l8-5" stroke="#60c860" /><path d="M1216 682l14 2" stroke="#c85050" />
    <circle cx="1216" cy="682" r="2" fill="#e6d84a" />
    <g fontSize="8" fill="#333">
      <text x="1214" y="684" transform="rotate(180 1214 685)">elöl</text>
      <text x="1227" y="690" transform="rotate(-12 1227 690)">jo</text>
      <text x="1209" y="669" fontSize="6">felül</text>
    </g>
  </svg>
);

const Suggested = () => (
  <div className="absolute top-[17px] left-[394px] h-[29px] w-[151px] border border-[#bdbdbd] bg-[#fbfbfb] px-[3px]">
    <div className="flex h-[12px] items-center justify-between font-['Noto_Sans'] text-[7px] text-[#333]">
      Javasolt parancsok
      <button aria-label="Bezárás"><svg viewBox="0 0 8 8" className="size-[8px]" stroke="#222"><path d="M1 1l6 6M7 1 1 7" /></svg></button>
    </div>
    <svg viewBox="0 0 146 14" className="h-[14px] w-[146px]" fill="none">
      <path d="M.5 2v10M11.5 2v10M1 7h4M7 7h4" stroke="#444" /><path d="M8 1 4 7h3l-2 5" stroke="#d8a820" />
      <path d="M16 2h9v10h-9z" fill="#dcebf6" stroke="#34699a" /><path d="M18 5h1M21 5h3M18 8h1M21 8h3M18 10h6" stroke="#34699a" />
      <path d="M31 11l7-8" stroke="#b88a50" /><circle cx="31" cy="11" r="1" fill="#555" /><circle cx="38" cy="3" r="1" fill="#e07b28" />
      <path d="M45 11h10M47 2v6M52 2v6M46 6l1 2 2-2M51 6l1 2 2-2" stroke="#bbb" />
      <path d="M60 2h6v6h-6z" fill="#6d84c8" stroke="#334" /><path d="M64 6h6v6h-6z" fill="#8ab88a" stroke="#365" />
      <circle cx="79" cy="9" r="3.5" fill="#e0a030" stroke="#444" /><path d="M76 1h6v4h-6z" fill="#b04038" /><circle cx="79" cy="9" r="1" fill="#444" />
      <path d="M89 4l5-2 5 2v6l-5 2-5-2z" fill="#999" stroke="#333" /><path d="M89 4l5 2 5-2M94 6v6" stroke="#333" />
      <path d="M105 3l8 8M113 3l-8 8" stroke="#bbb" /><path d="M119 3h4M119 3v6M122 4h7v8h-7z" stroke="#bbb" />
      <circle cx="140" cy="9" r="3" stroke="#bbb" /><path d="M134 9l6-6 4 4M138 9h4M140 7v4" stroke="#bbb" />
    </svg>
  </div>
);

const sideIcons: React.ReactNode[] = [
  <g fill="#5b9bd8" stroke="#245a92"><path d="M4 1h5v5H4zM8 4h4v4H8zM1 6h5v5H1zM5 7h4v4H5z" /></g>,
  <g stroke="#6a8aa0" fill="#fff"><path d="M3 1h9v8H3z" /><path d="M1 3h9v8H1z" /><path d="M3 8l2-3 3 3" stroke="#58a058" /></g>,
  <g><path d="M1 1h11v10H1z" fill="#e8e8e8" stroke="#555" /><path d="M2 1h3v4H2z" fill="#30906a" /><path d="M8 1h4v4H8z" fill="#30906a" /><path d="M5 2h3v4H5z" fill="#c82850" /><path d="M2 10 5 6l3 3 3-2" stroke="#333" /></g>,
  <g><path d="M1 1h11v10H1z" fill="#2848b8" /><path d="M1 3c5 0 8 4 8 8H1z" fill="#f0d030" /><path d="M1 7c2 0 4 2 4 4H1z" fill="#e04028" /></g>,
  <g stroke="#b8b8b8"><path d="M1 2h4l1-1h6v10H1zM4.500 5c0-2 3-2 3 0 0 1-1.500 1-1.500 2M6 8.500v1" /></g>,
  <g stroke="#b8b8b8"><path d="M1 1h11v10H1z" /><circle cx="4" cy="4" r="1" /><circle cx="8.5" cy="4" r="1" /><circle cx="4" cy="8" r="1" /><circle cx="8.5" cy="8" r="1" /></g>,
  <g stroke="#d8b020" strokeWidth="1.5"><circle cx="9" cy="3.5" r="2.500" /><circle cx="3.5" cy="9" r="2" /><path d="M8 6 5 7" /></g>,
  <g stroke="#999"><path d="M1 1h10v10H1z" /><circle cx="6" cy="6" r="3" /><circle cx="6" cy="6" r="1" /><path d="M8 9h4" /></g>,
  <g stroke="#d0d0d0"><path d="M1 5h5v6H1zM3 5V2h4l1 1h4v7H6" /></g>,
];

const App: React.FC = () => (
  <div className="flex h-screen flex-col overflow-hidden bg-black pt-[25px] pr-[3px] pb-[26px] font-['Liberation_Sans',sans-serif]">
    <Header />
    <Ribbon />

    <div className="flex min-h-0 flex-1 border-b-2 border-[#c9c9c9] bg-white">
      <div className="flex min-w-0 flex-1 flex-col">
        <div className="flex h-[22px] shrink-0 items-stretch border-b border-[#4d8a86]">
          <div className="flex w-[77px] items-center bg-[#00618a] pl-[9px] text-white">
            <svg viewBox="0 0 10 10" className="mr-[3px] size-[10px]"><path d="M1 1h5v4h3v4H1z" fill="#dcecf5" stroke="#5aa0c8" /></svg>
            <span className="font-['Noto_Sans'] text-[7px] leading-[21px]">Alkatrész2</span>
            <button aria-label="Fül bezárása" className="mr-[3px] ml-auto"><svg viewBox="0 0 6 6" className="size-[6px]" stroke="#fff" strokeWidth="1.5"><path d="M.5.5l5 5M5.5.5l-5 5" /></svg></button>
          </div>
          <svg viewBox="0 0 40 21" className="mr-px ml-auto h-[21px] w-[40px]" fill="none">
            <path d="M5 7 2 9.500 5 12zM12 7l3 2.500L12 12z" stroke="#888" strokeWidth=".8" />
            <path d="M19 9h5l-2.500 3z" fill="#222" /><path d="M28 7l6 6M34 7l-6 6" stroke="#222" strokeWidth="1.5" />
          </svg>
        </div>

        <div className="flex min-h-0 flex-1">
          <aside className="relative w-[172px] shrink-0 border-r border-[#8b93a3] bg-white">
            <div className="flex h-[13px] items-center bg-[#3787a5] pr-[5px] pl-[2px] font-['Noto_Sans'] text-[7px] text-white">
              <svg viewBox="0 0 10 10" className="mr-[3px] size-[10px]" fill="#cfe4ee"><path d="M0 1h3v4h3v3H0zM7 7h2v2H7z" /></svg>
              EdgeTár
              <svg viewBox="0 0 20 8" className="ml-auto h-[8px] w-[20px]" stroke="#fff"><path d="M1 1.5h7" /><path d="M1 3.500h7L4.500 7z" fill="#fff" stroke="none" /><path d="M13 1.5l5 5M18 1.5l-5 5" strokeWidth="1.5" /></svg>
            </div>
            <ul className="mt-px grid h-[459px] auto-rows-fr font-['Noto_Sans'] text-[7px]">
              {rows.map((r, i) => <TreeRow key={i} row={r} />)}
            </ul>
            {/* mouse pointer with its click halo */}
            <svg viewBox="0 0 24 24" className="absolute top-[459px] left-[97px] size-[24px]" fill="none">
              <circle cx="11" cy="10" r="7.5" stroke="#f2ee1c" strokeWidth="3" strokeOpacity=".9" />
              <path d="M11 10v11l2.500-2 2 4 2-1-2-4h3z" fill="#fff" stroke="#333" />
            </svg>
          </aside>

          <main className="relative min-w-0 flex-1 overflow-hidden">
            <Model />
            <Suggested />
            <button className="absolute top-[46px] right-[8px] flex h-[27px] w-[17px] flex-col items-center border border-[#7d90a8] bg-[#c3d2e2] text-[#1f4a7c]">
              <svg viewBox="0 0 15 15" className="size-[15px]"><path d="M0 0h15v15H0z" fill="#f1f6fb" /><path d="M6 7h7v5H6z" fill="#1f4a7c" /><path d="M7.500 7V5a2 2 0 0 1 4 0v2" fill="none" stroke="#1f4a7c" strokeWidth="1.5" /></svg>
              <span className="text-[8px] leading-[10px] font-bold">F3</span>
            </button>
          </main>
        </div>
      </div>

      <aside className="flex w-[14px] shrink-0 flex-col items-center bg-[#fafafa] pt-[6px]">
        <svg viewBox="0 0 14 13" className="h-[13px] w-[14px]"><path d="M1 1h9v10H1z" fill="#5f93cf" stroke="#2a5a96" /><path d="M7 6h6v6H7z" fill="#dbe8f5" stroke="#2a5a96" /><path d="M9 8h2v2H9z" fill="#2a5a96" /></svg>
        <button className="mt-[2px] h-[68px] font-['Noto_Sans'] text-[8px] leading-[12px] whitespace-nowrap text-[#333] [writing-mode:vertical-rl]">Alakelem könyvtár</button>
        <div className="mt-[11px] grid h-[204px] auto-rows-fr items-center">
          {sideIcons.map((s, i) => <svg key={i} viewBox="0 0 13 12" fill="none" className="h-[12px] w-[13px]">{s}</svg>)}
        </div>
      </aside>
    </div>
  </div>
);

export default App;
